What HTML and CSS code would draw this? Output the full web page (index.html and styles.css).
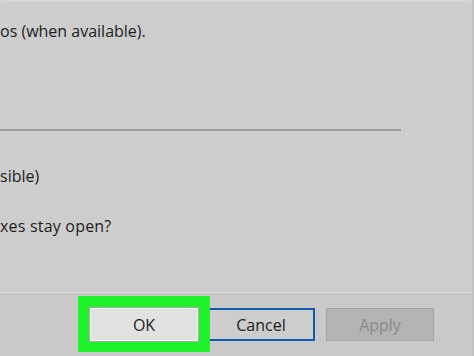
FILE: index.html
```html
<!DOCTYPE html>
<html lang="en">
<head>
  <meta charset="UTF-8" />
  <meta name="viewport" content="width=device-width, initial-scale=1.0"/>
  <title>Ease of Access</title>
  <link rel="stylesheet" href="styles.css">
</head>
<body>

  <div class="window">
    <div class="content">
      <p class="line first">os (when available).</p>
      <div class="rule"></div>
      <p class="line second">sible)</p>
      <p class="line third">xes stay open?</p>
    </div>

    <div class="footer">
      <div class="ok-wrap">
        <button class="btn ok">OK</button>
      </div>
      <button class="btn cancel">Cancel</button>
      <button class="btn apply" disabled>Apply</button>
    </div>
  </div>

</body>
</html>
```

FILE: styles.css
```css
* {
  box-sizing: border-box;
}

body {
  margin: 0;
  background: #cdcdcd;
  font-family: 'Open Sans', 'Noto Sans', sans-serif;
  font-size: 16px;
  color: #1c1c1c;
}

.window {
  width: 474px;
  height: 356px;
  overflow: hidden;
  border-right: 2px solid #c2c2c2;
  box-shadow: inset 0 3px 2px -1px #d6d6d6;
}

.content {
  height: 292px;
  padding-top: 20px;
}

.line {
  margin: 0;
  line-height: 22px;
  white-space: nowrap;
}

.rule {
  width: 401px;
  height: 2px;
  margin-top: 87px;
  background: #9c9c9c;
}

.second {
  margin-top: 34px;
}

.third {
  margin-top: 28px;
  letter-spacing: 0.2px;
}

.footer {
  height: 64px;
  border-top: 1px solid #dadada;
  background: #c9c9c9;
  display: flex;
  align-items: flex-start;
  padding: 15px 0 0 89px;
}

.btn {
  height: 33px;
  font-family: inherit;
  font-size: 16px;
  color: #1c1c1c;
  padding: 0;
}

.ok-wrap {
  position: relative;
}

.ok-wrap::before {
  content: "";
  position: absolute;
  top: -12px;
  left: -11px;
  right: -11px;
  bottom: -10px;
  background: #1ff22b;
  z-index: 1;
}

.ok {
  position: relative;
  z-index: 2;
  width: 110px;
  height: 35px;
  margin-top: -1px;
  background: #e1e1e1;
  border: 1px solid #a9a9a9;
  box-shadow: inset 0 0 0 1px #f4f4f4;
}

.cancel {
  width: 108px;
  margin-left: 8px;
  background: #cdcdcd;
  border: 2px solid #0c5db0;
}

.apply {
  width: 108px;
  margin-left: 11px;
  background: #b3b3b3;
  border: 1px solid #a6a6a6;
  color: #8a8a8a;
}
```
